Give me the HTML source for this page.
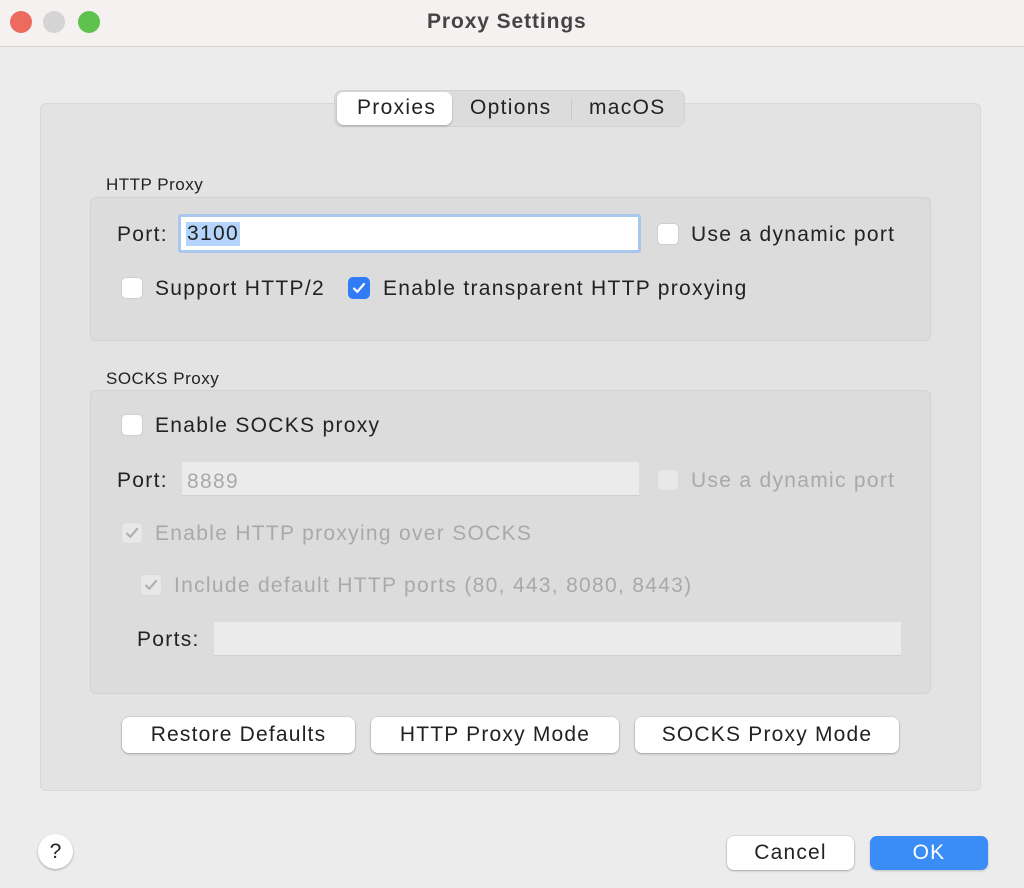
<!DOCTYPE html><html><head><style>
*{margin:0;padding:0;box-sizing:border-box}
body{width:1024px;height:888px;background:#ececec;font-family:"Liberation Sans",sans-serif;color:#222;position:relative;overflow:hidden}
.a{position:absolute}
.t{font-size:21px;letter-spacing:1.3px;white-space:nowrap}
.d{color:#a9a9a9}
.cb{position:absolute;width:22px;height:22px;border-radius:5px;background:#fff;border:1px solid #cfcfcf}
.cb.on{background:#2f7cf6;border-color:#2f7cf6}
.cb.dis{background:#e8e8e8;border-color:#dadada}
.cb svg{position:absolute;left:2px;top:2px}
.btn{position:absolute;height:36px;background:#fff;border-radius:7px;box-shadow:0 1px 2px rgba(0,0,0,.25),0 0 0 .5px rgba(0,0,0,.12);font-size:21px;letter-spacing:1.2px;text-align:center;line-height:36px;color:#222;white-space:nowrap}
</style></head><body>
<div class="a" style="left:0;top:0;width:1024px;height:47px;background:#f6f1f1;border-bottom:1px solid #d6d2d2"></div>
<div class="a" style="left:10px;top:11px;width:22px;height:22px;border-radius:50%;background:#ec6a5e"></div>
<div class="a" style="left:43px;top:11px;width:22px;height:22px;border-radius:50%;background:#d4d4d4"></div>
<div class="a" style="left:78px;top:11px;width:22px;height:22px;border-radius:50%;background:#5ec24f"></div>
<div class="a" style="left:427px;top:10px;font-size:21px;letter-spacing:0.9px;font-weight:bold;color:#444;white-space:nowrap">Proxy Settings</div>

<div class="a" style="left:40px;top:103px;width:941px;height:688px;background:#e3e3e3;border:1px solid #d8d8d8;border-radius:6px"></div>
<div class="a" style="left:334px;top:90px;width:351px;height:37px;background:#dcdcdc;border-radius:8px;border:1px solid #d2d2d2"></div>
<div class="a" style="left:337px;top:92px;width:115px;height:33px;background:#fff;border-radius:7px;box-shadow:0 1px 2px rgba(0,0,0,.25)"></div>
<div class="a t" style="left:357px;top:96px">Proxies</div>
<div class="a t" style="left:470px;top:96px">Options</div>
<div class="a" style="left:571px;top:99px;width:1px;height:20px;background:#c8c8c8"></div>
<div class="a t" style="left:589px;top:96px">macOS</div>

<div class="a" style="left:106px;top:175px;font-size:17px;letter-spacing:0.5px">HTTP Proxy</div>
<div class="a" style="left:90px;top:197px;width:841px;height:144px;background:#dcdcdc;border:1px solid #d2d2d2;border-radius:6px"></div>
<div class="a t" style="left:117px;top:223px">Port:</div>
<div class="a" style="left:178px;top:214px;width:463px;height:39px;background:#fff;border:3px solid #a9c6ec;border-radius:3px"></div>
<div class="a t" style="left:186px;top:222px;background:#b5d4fb;padding:0 1px">3100</div>
<div class="cb" style="left:657px;top:223px"></div>
<div class="a t" style="left:691px;top:223px">Use a dynamic port</div>
<div class="cb" style="left:121px;top:277px"></div>
<div class="a t" style="left:155px;top:277px">Support HTTP/2</div>
<div class="cb on" style="left:348px;top:277px"><svg width="16" height="16" viewBox="0 0 16 16"><path d="M3 8.5l3.3 3.3L13 4" stroke="#fff" stroke-width="2.2" fill="none" stroke-linecap="round" stroke-linejoin="round"/></svg></div>
<div class="a t" style="left:383px;top:277px">Enable transparent HTTP proxying</div>

<div class="a" style="left:106px;top:369px;font-size:17px;letter-spacing:0.5px">SOCKS Proxy</div>
<div class="a" style="left:90px;top:390px;width:841px;height:304px;background:#dcdcdc;border:1px solid #d2d2d2;border-radius:6px"></div>
<div class="cb" style="left:121px;top:414px"></div>
<div class="a t" style="left:155px;top:414px">Enable SOCKS proxy</div>
<div class="a t" style="left:117px;top:469px">Port:</div>
<div class="a" style="left:182px;top:462px;width:457px;height:34px;background:#ebebeb;border-bottom:1px solid #d0d0d0"></div>
<div class="a t d" style="left:187px;top:470px">8889</div>
<div class="cb dis" style="left:657px;top:469px"></div>
<div class="a t d" style="left:691px;top:469px">Use a dynamic port</div>
<div class="cb dis" style="left:121px;top:522px"><svg width="16" height="16" viewBox="0 0 16 16"><path d="M3 8.5l3.3 3.3L13 4" stroke="#b0b0b0" stroke-width="2.2" fill="none" stroke-linecap="round" stroke-linejoin="round"/></svg></div>
<div class="a t d" style="left:155px;top:522px">Enable HTTP proxying over SOCKS</div>
<div class="cb dis" style="left:140px;top:574px"><svg width="16" height="16" viewBox="0 0 16 16"><path d="M3 8.5l3.3 3.3L13 4" stroke="#b0b0b0" stroke-width="2.2" fill="none" stroke-linecap="round" stroke-linejoin="round"/></svg></div>
<div class="a t d" style="left:174px;top:574px">Include default HTTP ports (80, 443, 8080, 8443)</div>
<div class="a t" style="left:137px;top:628px">Ports:</div>
<div class="a" style="left:214px;top:622px;width:687px;height:34px;background:#ebebeb;border-bottom:1px solid #d0d0d0"></div>

<div class="btn" style="left:122px;top:717px;width:233px">Restore Defaults</div>
<div class="btn" style="left:371px;top:717px;width:248px">HTTP Proxy Mode</div>
<div class="btn" style="left:635px;top:717px;width:264px">SOCKS Proxy Mode</div>

<div class="a" style="left:38px;top:834px;width:35px;height:35px;border-radius:50%;background:#fff;box-shadow:0 1px 2px rgba(0,0,0,.3);text-align:center;line-height:35px;font-size:21px">?</div>
<div class="btn" style="left:727px;top:836px;width:127px;height:34px;line-height:34px">Cancel</div>
<div class="btn" style="left:870px;top:836px;width:118px;height:34px;line-height:34px;background:#3a8cf6;color:#fff;box-shadow:0 1px 2px rgba(0,0,0,.2)">OK</div>
</body></html>
